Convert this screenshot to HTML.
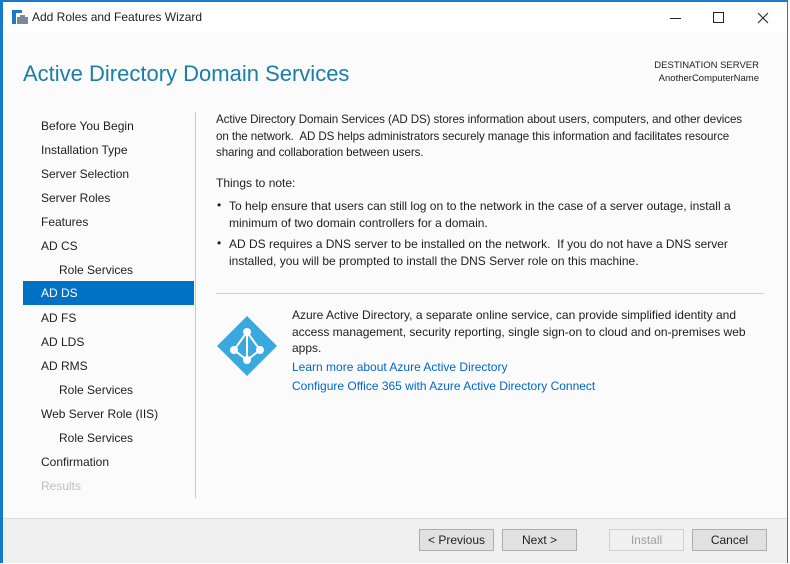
<!DOCTYPE html>
<html><head><style>
*{margin:0;padding:0;box-sizing:border-box}
body{width:790px;height:564px;background:#fff;position:relative;overflow:hidden;font-family:"Liberation Sans",sans-serif;font-size:12px;color:#1e1e1e}
.win{position:absolute;left:0;top:0;width:788px;height:563px;border:1px solid #1979ca;border-left:3px solid #1979ca;border-top:2px solid #1979ca;background:#fbfbfb}
.title{position:absolute;left:0;top:0;right:0;height:31px;background:#fff}
.abs{position:absolute;white-space:nowrap}
.nav div{position:absolute;left:38px;height:24px;line-height:24px;font-size:12px;color:#1e1e1e}
.nav .sub{left:56px}
.btn{position:absolute;top:527px;height:22px;border:1px solid #adadad;background:#e1e1e1;text-align:center;line-height:20px;font-size:12px}
p{margin:0}
a{color:#0066cc;text-decoration:none}
</style></head><body>
<div class="win">
 <div class="title">
  <svg class="abs" style="left:9px;top:8px" width="16" height="16" viewBox="0 0 16 16"><rect x="0" y="0" width="4" height="14" fill="#1e78c8"/><rect x="0" y="0" width="10" height="3" fill="#1e78c8"/><rect x="5" y="7" width="11" height="7" fill="#7a8a99"/><rect x="8" y="5" width="5" height="2" fill="#7a8a99"/></svg>
  <div class="abs" style="left:29px;top:8px;font-size:12px">Add Roles and Features Wizard</div>
  <div class="abs" style="left:667px;top:16px;width:11px;height:1px;background:#222"></div>
  <div class="abs" style="left:710px;top:10px;width:11px;height:11px;border:1px solid #222"></div>
  <svg class="abs" style="left:754px;top:10px" width="12" height="12"><path d="M1 1L11 11M11 1L1 11" stroke="#222" stroke-width="1"/></svg>
 </div>
 <div class="abs" style="left:20px;top:59px;font-size:22px;color:#1a7fa6">Active Directory Domain Services</div>
 <div class="abs" style="right:28px;top:57px;font-size:9.5px;text-align:right;line-height:13px">DESTINATION SERVER<br>AnotherComputerName</div>
 <div class="nav">
  <div style="top:112px">Before You Begin</div>
  <div style="top:136px">Installation Type</div>
  <div style="top:160px">Server Selection</div>
  <div style="top:184px">Server Roles</div>
  <div style="top:208px">Features</div>
  <div style="top:232px">AD CS</div>
  <div class="sub" style="top:256px">Role Services</div>
  <div style="top:279px;left:20px;width:171px;padding-left:18px;background:#0072c6;color:#fff">AD DS</div>
  <div style="top:304px">AD FS</div>
  <div style="top:328px">AD LDS</div>
  <div style="top:352px">AD RMS</div>
  <div class="sub" style="top:376px">Role Services</div>
  <div style="top:400px">Web Server Role (IIS)</div>
  <div class="sub" style="top:424px">Role Services</div>
  <div style="top:448px">Confirmation</div>
  <div style="top:472px;color:#c0c0c0">Results</div>
 </div>
 <div class="abs" style="left:192px;top:110px;width:1px;height:386px;background:#c8c8c8"></div>
 <div class="abs" style="left:213px;top:110px;line-height:16.5px;font-size:11.6px;letter-spacing:-0.1px">Active Directory Domain Services (AD DS) stores information about users, computers, and other devices<br>on the network.&nbsp; AD DS helps administrators securely manage this information and facilitates resource<br>sharing and collaboration between users.</div>
 <div class="abs" style="left:213px;top:174px">Things to note:</div>
 <div class="abs" style="left:214px;top:196px">•</div>
 <div class="abs" style="left:226px;top:196px;line-height:16.5px">To help ensure that users can still log on to the network in the case of a server outage, install a<br>minimum of two domain controllers for a domain.</div>
 <div class="abs" style="left:214px;top:234px">•</div>
 <div class="abs" style="left:226px;top:234px;line-height:16.5px">AD DS requires a DNS server to be installed on the network.&nbsp; If you do not have a DNS server<br>installed, you will be prompted to install the DNS Server role on this machine.</div>
 <div class="abs" style="left:213px;top:291px;width:548px;height:1px;background:#d0d0d0"></div>
 <svg class="abs" style="left:213px;top:313px" width="62" height="62" viewBox="0 0 62 62"><path d="M31 1L61 31L31 61L1 31Z" fill="#3aa9e0"/><g stroke="#fff" stroke-width="2" fill="none"><path d="M31 17L18 35L31 45L44 35Z"/><path d="M31 17V45"/></g><g fill="#fff"><circle cx="31" cy="17" r="4"/><circle cx="18" cy="35" r="4"/><circle cx="44" cy="35" r="4"/><circle cx="31" cy="45" r="4"/></g></svg>
 <div class="abs" style="left:289px;top:305px;line-height:16.5px">Azure Active Directory, a separate online service, can provide simplified identity and<br>access management, security reporting, single sign-on to cloud and on-premises web<br>apps.</div>
 <div class="abs" style="left:289px;top:358px"><a>Learn more about Azure Active Directory</a></div>
 <div class="abs" style="left:289px;top:377px"><a>Configure Office 365 with Azure Active Directory Connect</a></div>
 <div class="abs" style="left:0;top:516px;width:784px;height:45px;background:#f0f0f0;border-top:1px solid #dcdcdc"></div>
 <div class="btn" style="left:416px;width:75px">&lt; Previous</div>
 <div class="btn" style="left:499px;width:75px">Next &gt;</div>
 <div class="btn" style="left:606px;width:75px;color:#a0a0a0;border-color:#cfcfcf;background:#f0f0f0">Install</div>
 <div class="btn" style="left:689px;width:75px">Cancel</div>
</div>
</body></html>
